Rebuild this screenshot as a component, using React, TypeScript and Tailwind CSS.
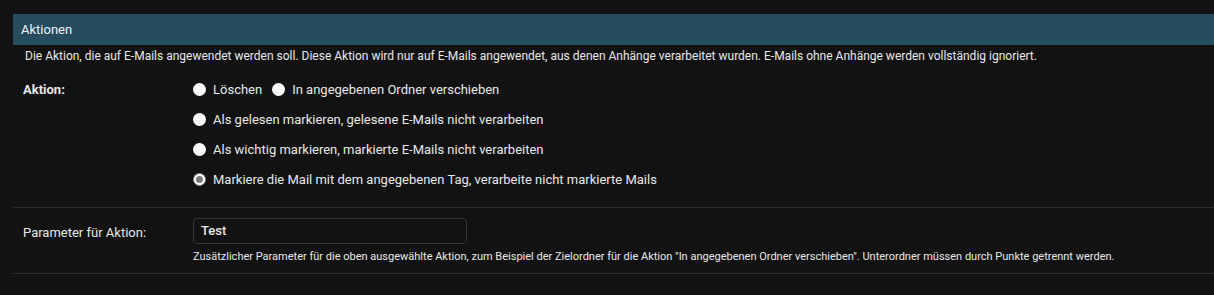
import React from "react";

function Radio({ checked }: { checked?: boolean }) {
  if (checked) {
    return (
      <span className="flex h-[13px] w-[13px] shrink-0 items-center justify-center rounded-full border border-[#8a8a8a] bg-white">
        <span className="h-[7px] w-[7px] rounded-full bg-[#7a7a7a]" />
      </span>
    );
  }
  return <span className="h-[13px] w-[13px] shrink-0 rounded-full bg-white" />;
}

function Option({ label, checked }: { label: string; checked?: boolean }) {
  return (
    <label className="flex items-center gap-[7px]">
      <Radio checked={checked} />
      <span>{label}</span>
    </label>
  );
}

export default function App() {
  return (
    <div
      className="h-[295px] w-[1214px] overflow-hidden bg-[#121212] pl-[13px] pt-[14px] text-[#e8e8e8]"
      style={{ fontFamily: "Roboto, 'Noto Sans', sans-serif" }}
    >
      <div className="flex h-[31px] items-center bg-[#264c5e] pl-[8px] text-[13px] text-[#eef2f4]">
        Aktionen
      </div>
      <div className="pl-[12px] pt-[4px] text-[12px] leading-[15px]">
        Die Aktion, die auf E-Mails angewendet werden soll. Diese Aktion wird nur auf E-Mails angewendet, aus denen Anhänge verarbeitet wurden. E-Mails ohne Anhänge werden vollständig ignoriert.
      </div>
      <div className="flex pt-[18px] text-[13px] leading-[15px]">
        <div className="w-[180px] pl-[10px] font-bold">Aktion:</div>
        <div className="flex flex-col gap-[15px]">
          <div className="flex items-center gap-[10px]">
            <Option label="Löschen" />
            <Option label="In angegebenen Ordner verschieben" />
          </div>
          <Option label="Als gelesen markieren, gelesene E-Mails nicht verarbeiten" />
          <Option label="Als wichtig markieren, markierte E-Mails nicht verarbeiten" />
          <Option label="Markiere die Mail mit dem angegebenen Tag, verarbeite nicht markierte Mails" checked />
        </div>
      </div>
      <div className="mt-[20px] border-t border-[#2c2c2c]" />
      <div className="flex pt-[10px] pb-[10px]">
        <div className="w-[180px] pl-[10px] pt-[7px] text-[13px] leading-[15px]">Parameter für Aktion:</div>
        <div className="flex flex-col">
          <div className="flex h-[26px] w-[274px] items-center rounded-[4px] border border-[#333] bg-[#121212] pl-[7px] text-[13px] font-medium">
            Test
          </div>
          <div className="pt-[6px] text-[11px] leading-[13px]">
            Zusätzlicher Parameter für die oben ausgewählte Aktion, zum Beispiel der Zielordner für die Aktion "In angegebenen Ordner verschieben". Unterordner müssen durch Punkte getrennt werden.
          </div>
        </div>
      </div>
      <div className="border-t border-[#2c2c2c]" />
    </div>
  );
}
